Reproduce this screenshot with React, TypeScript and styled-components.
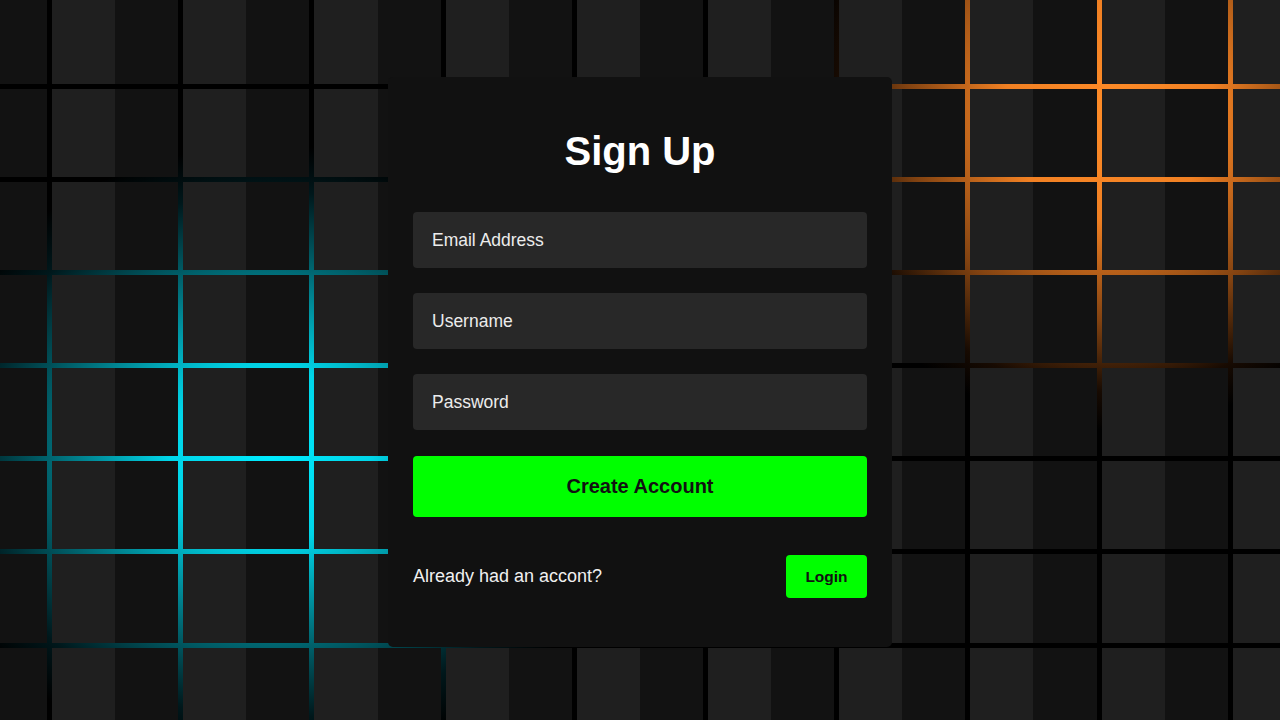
import React from "react";
import styled, { createGlobalStyle } from "styled-components";

const GlobalStyle = createGlobalStyle`
  html, body {
    margin: 0;
    padding: 0;
    background: #000;
    overflow: hidden;
  }
  body {
    font-family: "Liberation Sans", Arial, sans-serif;
  }
  * { box-sizing: border-box; }
`;

const Page = styled.main`
  width: 100vw;
  height: 100vh;
  display: grid;
  grid-template-columns: minmax(0, 1fr);
  grid-template-rows: minmax(0, 1fr);
  overflow: hidden;
  background:
    radial-gradient(
      ellipse 360px 310px at 270px 455px,
      rgba(0, 235, 255, 1) 0%,
      rgba(0, 225, 245, 0.95) 28%,
      rgba(0, 190, 210, 0.55) 60%,
      rgba(0, 130, 150, 0.18) 85%,
      rgba(0, 0, 0, 0) 100%
    ),
    radial-gradient(
      ellipse 310px 320px at 1110px 110px,
      rgba(255, 140, 40, 1) 0%,
      rgba(248, 132, 36, 0.97) 34%,
      rgba(215, 110, 28, 0.6) 66%,
      rgba(130, 60, 12, 0.18) 88%,
      rgba(0, 0, 0, 0) 100%
    ),
    #000;
`;

const Tiles = styled.div`
  grid-area: 1 / 1;
  display: grid;
  grid-template-columns: repeat(11, 126.2px);
  grid-auto-rows: 88.2px;
  gap: 5px;
  margin-left: -79.2px;
  margin-top: -4.7px;
  align-self: start;
  justify-self: start;
`;

const Tile = styled.span`
  display: block;
  background: linear-gradient(90deg, #1f1f1f 50%, #121212 50%);
`;

const Card = styled.section`
  grid-area: 1 / 1;
  justify-self: center;
  align-self: start;
  margin-top: 77px;
  width: 504px;
  height: 570px;
  padding: 51px 25px 49px;
  background: #111111;
  border-radius: 5px;
  display: flex;
  flex-direction: column;
`;

const Title = styled.h2`
  margin: 0 0 38px;
  font-size: 40px;
  line-height: 46px;
  font-weight: 700;
  color: #ffffff;
  text-align: center;
`;

const Field = styled.input`
  display: block;
  width: 100%;
  height: 56px;
  margin: 0 0 25px;
  padding: 0 19px;
  border: none;
  outline: none;
  border-radius: 4px;
  background: #282828;
  color: #ececec;
  font-family: "Liberation Sans", Arial, sans-serif;
  font-size: 17.5px;
  &::placeholder {
    color: #ececec;
    opacity: 1;
  }
`;

const PrimaryButton = styled.button`
  display: block;
  width: 100%;
  height: 61px;
  margin-top: 1px;
  border: none;
  border-radius: 4px;
  background: #00ff00;
  color: #111;
  font-family: "Liberation Sans", Arial, sans-serif;
  font-size: 20px;
  font-weight: 700;
  cursor: pointer;
`;

const Footer = styled.div`
  margin-top: 38px;
  display: flex;
  align-items: center;
  justify-content: space-between;
`;

const FooterText = styled.span`
  color: #f0f0f0;
  font-size: 18px;
`;

const SmallButton = styled.button`
  width: 81px;
  height: 43px;
  border: none;
  border-radius: 4px;
  background: #00ff00;
  color: #111;
  font-family: "Liberation Sans", Arial, sans-serif;
  font-size: 15.5px;
  font-weight: 700;
  cursor: pointer;
`;

export default function App() {
  const tiles = Array.from({ length: 88 }, (_, i) => i);
  return (
    <>
      <GlobalStyle />
      <Page>
        <Tiles>
          {tiles.map((i) => (
            <Tile key={i} />
          ))}
        </Tiles>
        <Card>
          <Title>Sign Up</Title>
          <Field type="email" placeholder="Email Address" />
          <Field type="text" placeholder="Username" />
          <Field type="password" placeholder="Password" />
          <PrimaryButton>Create Account</PrimaryButton>
          <Footer>
            <FooterText>Already had an accont?</FooterText>
            <SmallButton>Login</SmallButton>
          </Footer>
        </Card>
      </Page>
    </>
  );
}
